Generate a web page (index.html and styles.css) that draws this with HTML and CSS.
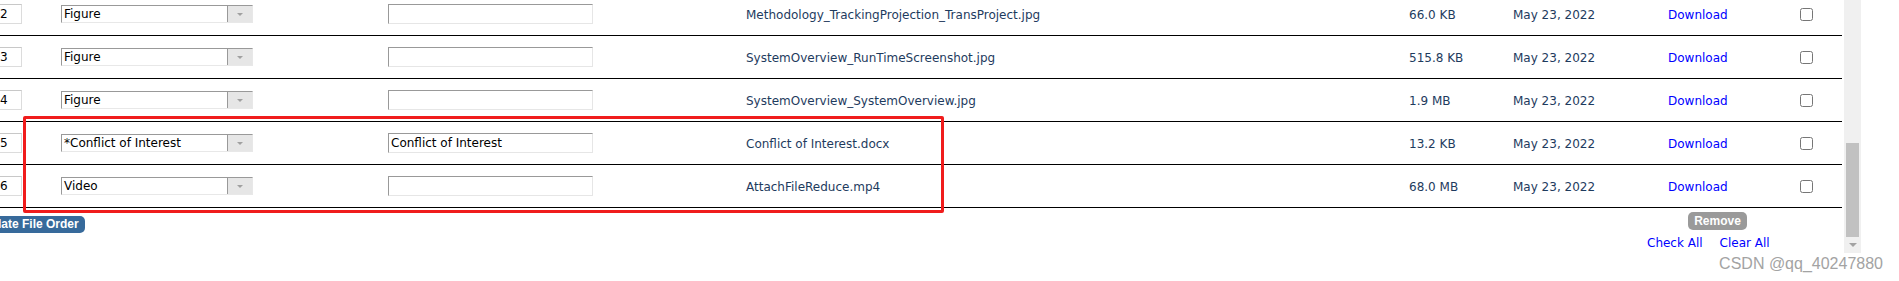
FILE: index.html
```html
<!DOCTYPE html>
<html lang="en">
<head>
<meta charset="utf-8">
<title>Attached files</title>
<link rel="stylesheet" href="styles.css">
</head>
<body>
<div class="page">
  <div class="content">
    <div class="files">
      <div class="row">
        <div class="c-num"><input class="num" type="text" value="2"></div>
        <div class="c-sel"><div class="select"><span class="val">Figure</span><span class="btn"></span></div></div>
        <div class="c-txt"><input class="txt" type="text" value=""></div>
        <div class="c-file">Methodology_TrackingProjection_TransProject.jpg</div>
        <div class="c-size">66.0 KB</div>
        <div class="c-date">May 23, 2022</div>
        <div class="c-dl"><a href="#">Download</a></div>
        <div class="c-cb"><input type="checkbox"></div>
      </div>
      <div class="row">
        <div class="c-num"><input class="num" type="text" value="3"></div>
        <div class="c-sel"><div class="select"><span class="val">Figure</span><span class="btn"></span></div></div>
        <div class="c-txt"><input class="txt" type="text" value=""></div>
        <div class="c-file">SystemOverview_RunTimeScreenshot.jpg</div>
        <div class="c-size">515.8 KB</div>
        <div class="c-date">May 23, 2022</div>
        <div class="c-dl"><a href="#">Download</a></div>
        <div class="c-cb"><input type="checkbox"></div>
      </div>
      <div class="row">
        <div class="c-num"><input class="num" type="text" value="4"></div>
        <div class="c-sel"><div class="select"><span class="val">Figure</span><span class="btn"></span></div></div>
        <div class="c-txt"><input class="txt" type="text" value=""></div>
        <div class="c-file">SystemOverview_SystemOverview.jpg</div>
        <div class="c-size">1.9 MB</div>
        <div class="c-date">May 23, 2022</div>
        <div class="c-dl"><a href="#">Download</a></div>
        <div class="c-cb"><input type="checkbox"></div>
      </div>
      <div class="row">
        <div class="c-num"><input class="num" type="text" value="5"></div>
        <div class="c-sel"><div class="select"><span class="val">*Conflict of Interest</span><span class="btn"></span></div></div>
        <div class="c-txt"><input class="txt" type="text" value="Conflict of Interest"></div>
        <div class="c-file">Conflict of Interest.docx</div>
        <div class="c-size">13.2 KB</div>
        <div class="c-date">May 23, 2022</div>
        <div class="c-dl"><a href="#">Download</a></div>
        <div class="c-cb"><input type="checkbox"></div>
      </div>
      <div class="row">
        <div class="c-num"><input class="num" type="text" value="6"></div>
        <div class="c-sel"><div class="select"><span class="val">Video</span><span class="btn"></span></div></div>
        <div class="c-txt"><input class="txt" type="text" value=""></div>
        <div class="c-file">AttachFileReduce.mp4</div>
        <div class="c-size">68.0 MB</div>
        <div class="c-date">May 23, 2022</div>
        <div class="c-dl"><a href="#">Download</a></div>
        <div class="c-cb"><input type="checkbox"></div>
      </div>
    </div>
    <div class="footer">
      <button class="order-btn" type="button">Update File Order</button>
      <div class="actions">
        <button class="remove-btn" type="button">Remove</button>
        <div class="links"><a href="#">Check All</a><a href="#">Clear All</a></div>
      </div>
    </div>
  </div>
  <div class="scrollbar">
    <div class="track"><div class="thumb"></div></div>
    <div class="arrow"></div>
  </div>
</div>
<div class="highlight"></div>
<div class="watermark">CSDN @qq_40247880</div>
</body>
</html>
```
FILE: styles.css
```css
* { box-sizing: border-box; }
html, body { margin: 0; background: #fff; }
body {
  width: 1899px;
  height: 281px;
  overflow: hidden;
  position: relative;
  font-family: "DejaVu Sans", Verdana, sans-serif;
  font-size: 12px;
}
.page { display: flex; align-items: flex-start; }
.content { width: 1844px; flex: none; }

.files { margin: -7px 0 0 -3px; width: 1845px; }
.row {
  display: grid;
  grid-template-columns: 64px 327px 358px 663px 104px 155px 132px 42px;
  height: 43px;
  border-bottom: 1px solid #000;
  align-items: center;
}
.num {
  display: block;
  width: 25px;
  height: 20px;
  margin: 0;
  padding: 0 0 0 2px;
  border: 1px solid #dcdcdc;
  border-top-color: #c8c8c8;
  font: 12px "DejaVu Sans", Verdana, sans-serif;
  color: #000;
  background: #fff;
}
.select {
  display: flex;
  width: 192px;
  height: 18px;
  border: 1px solid #999;
  border-bottom-color: #e8e8e8;
  border-right-color: #e8e8e8;
  background: #fff;
}
.select .val {
  flex: 1;
  padding-left: 2px;
  line-height: 16px;
  color: #000;
  white-space: nowrap;
  overflow: hidden;
}
.select .btn {
  width: 25px;
  flex: none;
  background: #e6e6e6;
  border-left: 1px solid #999;
  display: flex;
  align-items: center;
  justify-content: center;
}
.select .btn::after {
  content: "";
  width: 0;
  height: 0;
  border-left: 3px solid transparent;
  border-right: 3px solid transparent;
  border-top: 3px solid #a0a0a0;
  margin-top: 1px;
}
.txt {
  display: block;
  width: 205px;
  height: 20px;
  margin: 0;
  padding: 0 0 0 2px;
  border: 1px solid #999;
  border-bottom-color: #e6e6e6;
  border-right-color: #e6e6e6;
  font: 12px "DejaVu Sans", Verdana, sans-serif;
  color: #000;
  background: #fff;
}
.c-file, .c-size, .c-date { color: #1e3b5e; white-space: nowrap; padding-top: 1px; }
.c-dl { padding-top: 1px; }
.c-dl a { color: #0000ff; text-decoration: none; }
.c-cb input {
  display: block;
  margin: 0;
  width: 13px;
  height: 13px;
}

.footer {
  display: flex;
  align-items: flex-start;
  height: 46px;
}
.order-btn {
  margin: 8px 0 0 -28px;
  height: 17px;
  padding: 0 6px 0 6px;
  border: none;
  border-radius: 5px;
  background: #376a9b;
  color: #fff;
  font: bold 12px "Liberation Sans", Arial, sans-serif;
  line-height: 17px;
  white-space: nowrap;
}
.actions {
  margin: 4px 76px 0 auto;
  width: 120px;
  flex: none;
  display: flex;
  flex-direction: column;
}
.remove-btn {
  margin: 0 0 0 40px;
  width: 59px;
  height: 18px;
  padding: 0;
  border: none;
  border-radius: 5px;
  background: #9a9a9a;
  color: #fff;
  font: bold 12px "Liberation Sans", Arial, sans-serif;
  line-height: 18px;
}
.links {
  display: flex;
  gap: 17px;
  margin: 6px 0 0 -1px;
  line-height: 14px;
  white-space: nowrap;
}
.links a { color: #0000ff; text-decoration: none; }

.scrollbar {
  width: 17px;
  height: 253px;
  background: #f0f0f0;
  flex: none;
  display: flex;
  flex-direction: column;
}
.track { flex: 1; position: relative; }
.thumb {
  position: absolute;
  left: 2px;
  right: 2px;
  top: 143px;
  height: 94px;
  background: #c1c1c1;
}
.arrow {
  height: 16px;
  display: flex;
  align-items: center;
  justify-content: center;
}
.arrow::after {
  content: "";
  border-left: 4px solid transparent;
  border-right: 4px solid transparent;
  border-top: 4px solid #a3a3a3;
  margin-top: -1px;
}

.highlight {
  position: absolute;
  left: 23px;
  top: 116px;
  width: 921px;
  height: 97px;
  border: 3px solid #f01c1c;
  border-radius: 2px;
}
.watermark {
  position: absolute;
  right: 16px;
  top: 255px;
  font: 16px/18px "Liberation Sans", Arial, sans-serif;
  color: #a3a3a3;
  white-space: nowrap;
}
```
